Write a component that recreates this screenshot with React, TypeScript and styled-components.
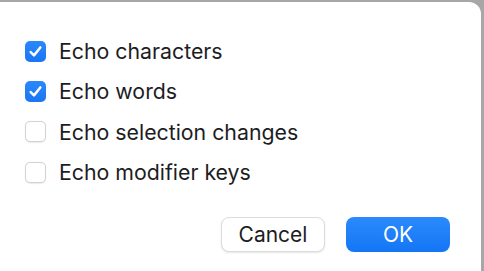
import { useState } from "react";
import styled, { createGlobalStyle } from "styled-components";

const GlobalStyle = createGlobalStyle`
  html, body {
    margin: 0;
    padding: 0;
    background: #a7a7a7;
    width: 484px;
    height: 271px;
    overflow: hidden;
  }
`;

const Panel = styled.div`
  margin: 2px 3px 0 0;
  height: 269px;
  background: #ffffff;
  border-top-right-radius: 12px;
  box-sizing: border-box;
  padding: 29px 31px 0 25px;
  display: flex;
  flex-direction: column;
  font-family: Inter, "Liberation Sans", sans-serif;
  color: #1d1d1f;
`;

const OptionList = styled.div`
  display: flex;
  flex-direction: column;
`;

const Row = styled.label`
  display: flex;
  align-items: center;
  gap: 13px;
  height: 40.3px;
  font-size: 21.3px;
  cursor: default;
`;

const Box = styled.span<{ $checked: boolean }>`
  width: 21px;
  height: 21px;
  box-sizing: border-box;
  border-radius: 5px;
  display: flex;
  align-items: center;
  justify-content: center;
  background: ${p => (p.$checked ? "linear-gradient(#2b88fb, #1a76f2)" : "#ffffff")};
  border: ${p => (p.$checked ? "none" : "1px solid #d2d2d2")};
  box-shadow: ${p => (p.$checked ? "none" : "0 0.5px 1px rgba(0,0,0,0.08)")};
`;

const Buttons = styled.div`
  display: flex;
  justify-content: flex-end;
  gap: 21px;
  margin-top: 25px;
`;

const Button = styled.button<{ $primary?: boolean }>`
  width: 104px;
  height: 35px;
  border-radius: 8px;
  font-family: Inter, "Liberation Sans", sans-serif;
  font-size: 21px;
  padding: 0;
  color: ${p => (p.$primary ? "#ffffff" : "#1d1d1f")};
  background: ${p => (p.$primary ? "linear-gradient(#2a8afc, #1476f5)" : "#ffffff")};
  border: ${p => (p.$primary ? "none" : "1px solid #dcdcdc")};
  box-shadow: ${p => (p.$primary ? "none" : "0 1px 2px rgba(0,0,0,0.1)")};
`;

const Check = () => (
  <svg width="15" height="15" viewBox="0 0 14 14">
    <path d="M2.5 7.5 L5.6 10.6 L11.5 3.2" fill="none" stroke="#fff" strokeWidth="2.3" strokeLinecap="round" strokeLinejoin="round" />
  </svg>
);

const options = [
  "Echo characters",
  "Echo words",
  "Echo selection changes",
  "Echo modifier keys",
];

export default function App() {
  const [checked, setChecked] = useState([true, true, false, false]);

  return (
    <>
      <GlobalStyle />
      <Panel>
        <OptionList>
          {options.map((label, i) => (
            <Row key={label} onClick={() => setChecked(checked.map((c, j) => (j === i ? !c : c)))}>
              <Box $checked={checked[i]}>{checked[i] && <Check />}</Box>
              {label}
            </Row>
          ))}
        </OptionList>
        <Buttons>
          <Button>Cancel</Button>
          <Button $primary>OK</Button>
        </Buttons>
      </Panel>
    </>
  );
}
